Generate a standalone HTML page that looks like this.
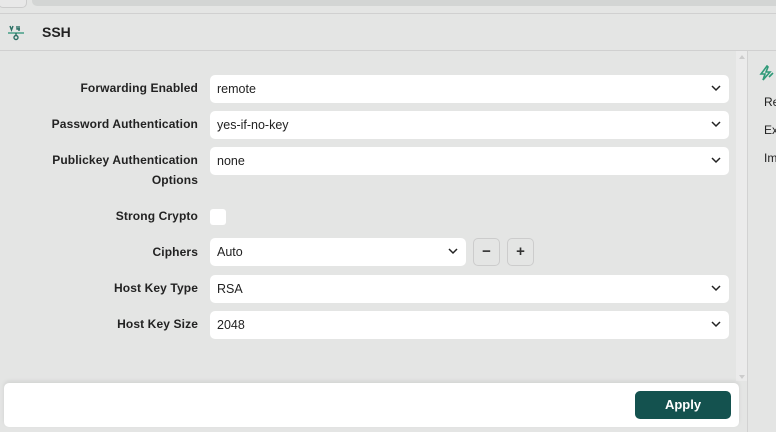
<!DOCTYPE html>
<html><head><style>
body{margin:0;width:776px;height:432px;background:#e4e5e4;font-family:"Liberation Sans",sans-serif;position:relative;overflow:hidden;color:#222}
.a{position:absolute}
.lbl{position:absolute;right:578px;font-size:12px;font-weight:bold;text-align:right;color:#222;letter-spacing:0.12px}
.in{position:absolute;left:210px;width:519px;height:28px;background:#fff;border-radius:5px;font-size:12.5px;line-height:28px;box-sizing:border-box;padding-left:7px;color:#222}
.chev{position:absolute;right:8px;top:10px;width:10px;height:7px}
.btn{position:absolute;top:238px;width:27px;height:28px;box-sizing:border-box;border:1px solid #ccc;border-radius:5px;font-weight:bold;font-size:15px;text-align:center;line-height:25px;color:#333}
</style></head><body>
<div class="a" style="left:-2px;top:-6px;width:27px;height:12px;border:1px solid #ccc;border-radius:5px;background:#e8e8e8"></div>
<div class="a" style="left:32px;top:-6px;width:760px;height:12px;border-radius:5px;background:#d3d5d4"></div>
<div class="a" style="left:0;top:13px;width:776px;height:1px;background:#d0d0d0"></div>
<svg class="a" style="left:8px;top:25px" width="16" height="16" viewBox="0 0 16 16" fill="none" stroke="#2a6e63" stroke-width="1.4"><path d="M2 1l1.5 4 1.5-4M9 1v3h3M11 1v5"/><path d="M0 8h16" stroke="#3a9a80"/><circle cx="8" cy="12.5" r="2"/><path d="M8 8v2.5"/></svg>
<div class="a" style="left:42px;top:24px;font-size:14px;font-weight:bold;color:#222">SSH</div>
<div class="a" style="left:0;top:50px;width:776px;height:1px;background:#d0d0d0"></div>
<div class="a" style="left:736px;top:51px;width:12px;height:330px;background:#ebebeb"></div>
<div class="a" style="left:739px;top:55px;width:0;height:0;border-left:3px solid transparent;border-right:3px solid transparent;border-bottom:4px solid #ccc"></div>
<div class="a" style="left:739px;top:375px;width:0;height:0;border-left:3px solid transparent;border-right:3px solid transparent;border-top:4px solid #ccc"></div>
<div class="a" style="left:747px;top:51px;width:1px;height:381px;background:#d2d2d2"></div>
<svg class="a" style="left:758px;top:65px" width="16" height="16" viewBox="0 0 16 16" fill="none" stroke="#2f9a78" stroke-width="1.6"><path d="M9 1L3 9h4l-2 6 7-8H8l2-5z"/><path d="M11 12l4-4"/></svg>
<div class="a" style="left:764px;top:95px;font-size:12px">Re</div>
<div class="a" style="left:764px;top:123px;font-size:12px">Ex</div>
<div class="a" style="left:764px;top:151px;font-size:12px">Im</div>

<div class="lbl" style="top:81px">Forwarding Enabled</div>
<div class="in" style="top:75px">remote<svg class="chev" viewBox="0 0 10 7"><path d="M1 1l4 4 4-4" stroke="#222" stroke-width="1.5" fill="none"/></svg></div>
<div class="lbl" style="top:117px">Password Authentication</div>
<div class="in" style="top:111px">yes-if-no-key<svg class="chev" viewBox="0 0 10 7"><path d="M1 1l4 4 4-4" stroke="#222" stroke-width="1.5" fill="none"/></svg></div>
<div class="lbl" style="top:153px;line-height:20px;margin-top:-3px">Publickey Authentication<br>Options</div>
<div class="in" style="top:147px">none<svg class="chev" viewBox="0 0 10 7"><path d="M1 1l4 4 4-4" stroke="#222" stroke-width="1.5" fill="none"/></svg></div>
<div class="lbl" style="top:209px">Strong Crypto</div>
<div class="a" style="left:210px;top:209px;width:16px;height:16px;background:#fff;border-radius:3px"></div>
<div class="lbl" style="top:245px">Ciphers</div>
<div class="in" style="top:238px;width:256px">Auto<svg class="chev" viewBox="0 0 10 7"><path d="M1 1l4 4 4-4" stroke="#222" stroke-width="1.5" fill="none"/></svg></div>
<div class="btn" style="left:473px">−</div>
<div class="btn" style="left:507px">+</div>
<div class="lbl" style="top:281px">Host Key Type</div>
<div class="in" style="top:275px">RSA<svg class="chev" viewBox="0 0 10 7"><path d="M1 1l4 4 4-4" stroke="#222" stroke-width="1.5" fill="none"/></svg></div>
<div class="lbl" style="top:317px">Host Key Size</div>
<div class="in" style="top:311px">2048<svg class="chev" viewBox="0 0 10 7"><path d="M1 1l4 4 4-4" stroke="#222" stroke-width="1.5" fill="none"/></svg></div>

<div class="a" style="left:4px;top:383px;width:735px;height:44px;background:#fff;border-radius:5px;box-shadow:0 -2px 4px rgba(0,0,0,0.08)"></div>
<div class="a" style="left:635px;top:391px;width:96px;height:28px;background:#14524f;border-radius:5px;color:#fff;font-weight:bold;font-size:13px;text-align:center;line-height:28px">Apply</div>
</body></html>
